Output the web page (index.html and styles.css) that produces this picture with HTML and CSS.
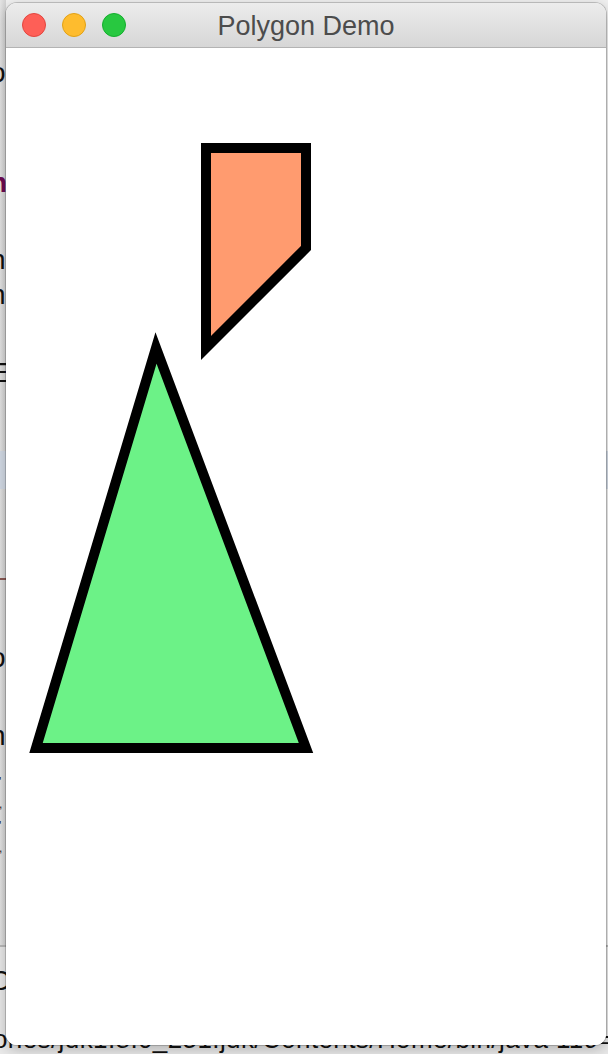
FILE: index.html
```html
<!DOCTYPE html>
<html>
<head>
<meta charset="utf-8">
<title>Polygon Demo</title>
<link rel="stylesheet" href="styles.css">
</head>
<body>
<div class="desktop">
  <div class="editor">
    <div class="ln l1">o</div>
    <div class="ln l2 kw">n</div>
    <div class="ln l3">n</div>
    <div class="ln l4">n</div>
    <div class="ln l5">E</div>
    <div class="band"></div>
    <div class="rule-brown"></div>
    <div class="ln l6">o</div>
    <div class="ln l7">n</div>
    <div class="ticks"><span>'</span><span>,</span><span>'</span><span>,</span></div>
  </div>
  <div class="console">
    <div class="ln c1">C</div>
    <div class="cmd">ones/jdk1.8.0_251.jdk/Contents/Home/bin/java  119=10=2</div>
  </div>
</div>

<div class="window">
  <div class="titlebar">
    <div class="lights">
      <span class="light red"></span>
      <span class="light yellow"></span>
      <span class="light green"></span>
    </div>
    <div class="title">Polygon Demo</div>
    <div class="spacer"></div>
  </div>
  <div class="content">
    <svg class="canvas" width="600" height="997" viewBox="0 0 600 997">
      <polygon points="200,100 300,100 300,200 200,300" fill="#ff9b6f" stroke="#000" stroke-width="10" stroke-miterlimit="10"/>
      <polygon points="150,300 30,700 300,700" fill="#6cf287" stroke="#000" stroke-width="10" stroke-miterlimit="10"/>
    </svg>
  </div>
</div>
</body>
</html>
```

FILE: styles.css
```css
html, body {
  margin: 0;
  padding: 0;
}

body {
  width: 608px;
  height: 1054px;
  overflow: hidden;
  position: relative;
  background: #dcdcdc;
  font-family: "Liberation Sans", "Helvetica", Arial, sans-serif;
}

.desktop {
  display: flex;
  flex-direction: column;
  width: 608px;
  height: 1054px;
  background: linear-gradient(to right, #e4e4e4 0, #d2d2d2 6px, #f0f0f0 6px);
}

.editor {
  height: 972px;
  border-bottom: 2px solid #b9b9b9;
  box-sizing: border-box;
  display: flex;
  flex-direction: column;
}

.ln {
  font-size: 28px;
  line-height: 34px;
  height: 34px;
  color: #111;
  margin-left: -10px;
  font-family: "Liberation Sans", Arial, sans-serif;
}

.kw {
  color: #6e0a52;
  font-weight: bold;
}

.l1 { margin-top: 56px; }
.l2 { margin-top: 76px; }
.l3 { margin-top: 43px; }
.l4 { margin-top: 1px; }
.l5 { margin-top: 44px; }

.band {
  margin-top: 61px;
  height: 38px;
  background: #d3dbe6;
}

.rule-brown {
  margin-top: 89px;
  height: 2px;
  width: 8px;
  background: #8b5a55;
}

.l6 { margin-top: 61px; }
.l7 { margin-top: 44px; }

.ticks {
  margin-top: 18px;
  margin-left: -1px;
  display: flex;
  flex-direction: column;
  font-size: 12px;
  line-height: 22px;
  color: #222;
}

.console {
  flex: 1;
  display: flex;
  flex-direction: column;
  background: #e9e9e9;
}

.c1 {
  margin-top: 17px;
  margin-left: -10px;
}

.cmd {
  margin-top: 26px;
  margin-left: -7px;
  font-size: 26px;
  line-height: 30px;
  white-space: nowrap;
  color: #111;
  letter-spacing: 0.4px;
}

.window {
  position: absolute;
  left: 6px;
  top: 3px;
  width: 600px;
  height: 1042px;
  border-radius: 11px;
  overflow: hidden;
  background: #fff;
  display: flex;
  flex-direction: column;
  box-shadow: 0 0 0 1px rgba(0,0,0,0.18), 0 4px 14px rgba(0,0,0,0.25);
}

.titlebar {
  height: 44px;
  flex: none;
  display: grid;
  grid-template-columns: 1fr auto 1fr;
  align-items: center;
  padding-left: 16px;
  padding-right: 16px;
  background: linear-gradient(to bottom, #ececec, #d6d6d6);
  border-bottom: 1px solid #b3b3b3;
}

.lights {
  display: flex;
  gap: 16px;
  margin-top: -1px;
}

.light {
  width: 22px;
  height: 22px;
  border-radius: 50%;
  display: block;
}

.red { background: #fe5f57; border: 1px solid #e2463f; }
.yellow { background: #febc2e; border: 1px solid #e1a116; }
.green { background: #28c840; border: 1px solid #14ae2d; }

.title {
  font-size: 27px;
  color: #4c4c4c;
  margin-top: 2px;
}

.content {
  flex: 1;
  background: #fff;
}

.canvas {
  display: block;
}
```
